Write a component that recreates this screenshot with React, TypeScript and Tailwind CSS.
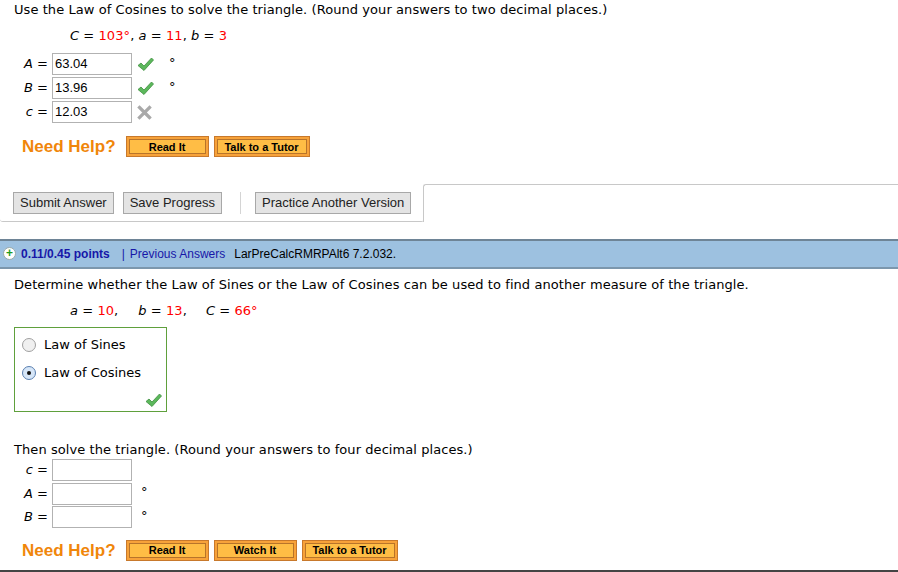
import React from "react";

const V = { fontFamily: '"DejaVu Sans", Verdana, sans-serif' };
const A = { fontFamily: '"Liberation Sans", Arial, sans-serif' };

function Check() {
  return (
    <svg width="17" height="15" viewBox="0 0 17 15">
      <path d="M1 8.5 L4 6 L7 9 L14.5 1 L16.5 3 L7 13.5 Z" fill="#5cb85c" stroke="#3f8f3f" strokeWidth="0.8" strokeLinejoin="round" />
    </svg>
  );
}

function Cross() {
  return (
    <svg width="15" height="15" viewBox="0 0 15 15">
      <path d="M2.5 2.5 L12.5 12.5 M12.5 2.5 L2.5 12.5" stroke="#a9a9a9" strokeWidth="3.2" strokeLinecap="square" />
    </svg>
  );
}

function OrangeBtn({ label, w }: { label: string; w: string }) {
  return (
    <div className={`${w} h-[21px] border border-[#c8792c] bg-[#f7a23a] p-[2px]`}>
      <div
        className="h-full w-full border border-[#b8742a] bg-[#ffbd45] flex items-center justify-center text-[11px] font-bold text-black"
        style={A}
      >
        {label}
      </div>
    </div>
  );
}

function GrayBtn({ label }: { label: string }) {
  return (
    <div
      className="h-[22px] px-[6px] border border-[#a8a8a8] bg-[#e4e4e4] flex items-center text-[13px] text-[#222]"
      style={A}
    >
      {label}
    </div>
  );
}

function Deg({ cls }: { cls: string }) {
  return (
    <span className={`${cls} text-[13px] leading-none -mt-[4px] text-black`} style={V}>
      °
    </span>
  );
}

function Row({ label, value, mark, deg, degX, h }: { label: React.ReactNode; value: string; mark?: React.ReactNode; deg?: boolean; degX: string; h: string }) {
  return (
    <div className={`flex items-center ${h}`}>
      <div className="w-[38px] text-right pr-[4px] text-[13px] text-black" style={V}>
        {label}
      </div>
      <div className="w-[80px] h-[22px] border border-[#b2b2b2] bg-white flex items-center pl-[2px] text-[13px] text-black" style={A}>
        {value}
      </div>
      {mark !== undefined ? <div className="ml-[5px] w-[17px] flex items-center">{mark}</div> : null}
      {deg ? <Deg cls={degX} /> : null}
    </div>
  );
}

function Lbl({ v }: { v: string }) {
  return (
    <>
      <i>{v}</i> =
    </>
  );
}

function NeedHelp({ buttons }: { buttons: { label: string; w: string }[] }) {
  return (
    <div className="flex items-center pl-[22px]">
      <span className="text-[17px] font-bold text-[#f0860a] mr-[10px]" style={A}>
        Need Help?
      </span>
      <div className="flex gap-[5px]">
        {buttons.map((b) => (
          <OrangeBtn key={b.label} label={b.label} w={b.w} />
        ))}
      </div>
    </div>
  );
}

function Radio({ checked }: { checked?: boolean }) {
  return (
    <div
      className={`w-[14px] h-[14px] rounded-full border ${checked ? "border-[#5a7fb0] bg-[#d6e6f8]" : "border-[#a0a0a0] bg-[#f0f0f0]"} flex items-center justify-center`}
    >
      {checked ? <div className="w-[4px] h-[4px] rounded-full bg-[#111]" /> : null}
    </div>
  );
}

export default function App() {
  const red = "text-[#ff0000]";
  return (
    <div className="w-[898px] h-[572px] bg-white overflow-hidden relative text-black">
      <div className="pt-[2px]">
        <p className="pl-[14px] text-[13px] leading-[16px] tracking-[0.07px]" style={V}>
          Use the Law of Cosines to solve the triangle. (Round your answers to two decimal places.)
        </p>
        <p className="pl-[70px] mt-[10px] text-[13px] leading-[16px] tracking-[0.07px]" style={V}>
          <i>C</i> = <span className={red}>103°</span>, <i>a</i> = <span className={red}>11</span>, <i>b</i> = <span className={red}>3</span>
        </p>
        <div className="mt-[8px] pl-[14px]">
          <Row h="h-[24px]" label={<Lbl v="A" />} value="63.04" mark={<Check />} deg degX="ml-[15px]" />
          <Row h="h-[24px]" label={<Lbl v="B" />} value="13.96" mark={<Check />} deg degX="ml-[15px]" />
          <Row h="h-[24px]" label={<Lbl v="c" />} value="12.03" mark={<Cross />} degX="" />
        </div>
        <div className="mt-[10px]">
          <NeedHelp
            buttons={[
              { label: "Read It", w: "w-[83px]" },
              { label: "Talk to a Tutor", w: "w-[96px]" },
            ]}
          />
        </div>
        <div className="mt-[24px] flex">
          <div className="w-[424px] border-b border-[#c8c8c8] rounded-br-[3px] rounded-bl-[3px] pb-[7px] pl-[13px] pt-[8px] flex items-center">
            <div className="flex gap-[9px]">
              <GrayBtn label="Submit Answer" />
              <GrayBtn label="Save Progress" />
            </div>
            <div className="w-px h-[22px] bg-[#d4d4d4] ml-[18px] mr-[14px]" />
            <GrayBtn label="Practice Another Version" />
          </div>
          <div className="flex-1 h-[38px] border-t border-l border-[#c8c8c8] rounded-tl-[3px] -ml-px" />
        </div>
        <div className="mt-[17px] h-[30px] bg-[#9dc1e0] border-t-2 border-b-2 border-t-[#6e8496] border-b-[#7c97ad] flex items-center text-[12px]" style={A}>
          <div className="ml-[3px] w-[13px] h-[13px] rounded-full bg-white border border-[#9aa] flex items-center justify-center">
            <span className="text-[#1f9a1f] font-bold text-[12px] leading-none -mt-px">+</span>
          </div>
          <span className="ml-[5px] font-bold text-[#1717a8]">0.11/0.45 points</span>
          <span className="ml-[12px] text-[#1717a8]">|</span>
          <span className="ml-[5px] text-[#1717a8]">Previous Answers</span>
          <span className="ml-[9px] text-black">LarPreCalcRMRPAlt6 7.2.032.</span>
        </div>
        <p className="pl-[14px] mt-[8px] text-[13px] leading-[16px] tracking-[0.07px]" style={V}>
          Determine whether the Law of Sines or the Law of Cosines can be used to find another measure of the triangle.
        </p>
        <p className="pl-[70px] mt-[10px] text-[13px] leading-[16px] tracking-[0.07px] flex" style={V}>
          <span><i>a</i> = <span className={red}>10</span>,</span>
          <span className="ml-[20px]"><i>b</i> = <span className={red}>13</span>,</span>
          <span className="ml-[19px]"><i>C</i> = <span className={red}>66°</span></span>
        </p>
        <div className="ml-[14px] mt-[8px] w-[153px] h-[85px] border border-[#5fa03c] relative text-[13px]" style={V}>
          <div className="flex items-center mt-[9px] ml-[7px] h-[16px]">
            <Radio />
            <span className="ml-[8px]">Law of Sines</span>
          </div>
          <div className="flex items-center mt-[12px] ml-[7px] h-[16px]">
            <Radio checked />
            <span className="ml-[8px]">Law of Cosines</span>
          </div>
          <div className="absolute right-[4px] bottom-[3px]">
            <Check />
          </div>
        </div>
        <p className="pl-[14px] mt-[30px] text-[13px] leading-[16px] tracking-[0.07px]" style={V}>
          Then solve the triangle. (Round your answers to four decimal places.)
        </p>
        <div className="mt-[1px] pl-[14px]">
          <Row h="h-[23px]" label={<Lbl v="c" />} value="" degX="" />
          <Row h="h-[24px]" label={<Lbl v="A" />} value="" deg degX="ml-[9px]" />
          <Row h="h-[23px]" label={<Lbl v="B" />} value="" deg degX="ml-[9px]" />
        </div>
        <div className="mt-[9px]">
          <NeedHelp
            buttons={[
              { label: "Read It", w: "w-[83px]" },
              { label: "Watch It", w: "w-[83px]" },
              { label: "Talk to a Tutor", w: "w-[96px]" },
            ]}
          />
        </div>
      </div>
      <div className="absolute left-0 right-0 bottom-0 h-[2px] bg-[#444]" />
    </div>
  );
}
